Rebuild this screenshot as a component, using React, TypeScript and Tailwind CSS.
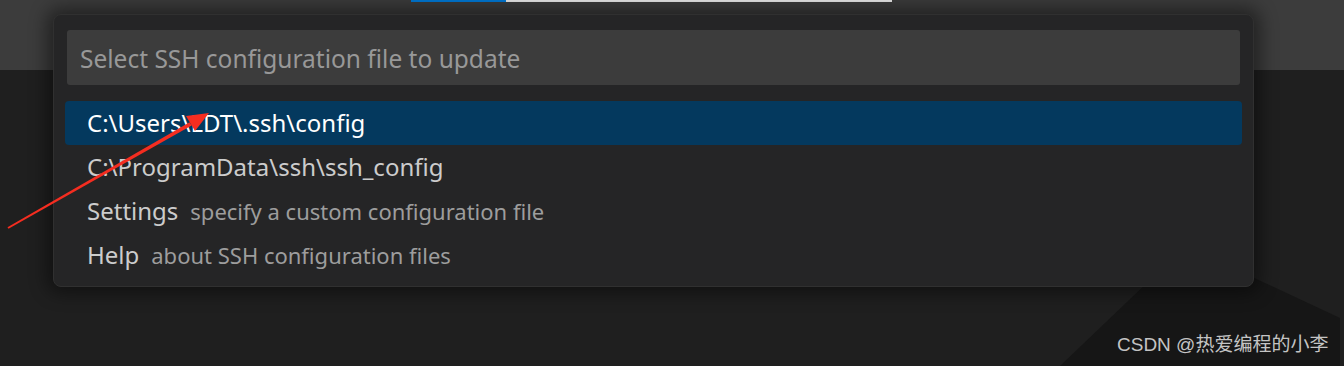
import React from 'react';

const font = { fontFamily: '"Noto Sans", "Open Sans", sans-serif' };

interface PickItem {
    label: string;
    description?: string;
    selected?: boolean;
}

const items: PickItem[] = [
    { label: 'C:\\Users\\LDT\\.ssh\\config', selected: true },
    { label: 'C:\\ProgramData\\ssh\\ssh_config' },
    { label: 'Settings', description: 'specify a custom configuration file' },
    { label: 'Help', description: 'about SSH configuration files' },
];

function QuickPick() {
    return (
        <div
            className="absolute left-[53px] top-[14px] w-[1201px] rounded-[8px] border border-[#303030] bg-[#252526] px-[11px] pt-[15px] pb-[9px] shadow-[0_0_18px_6px_rgba(0,0,0,0.45)]"
            style={font}
        >
            <div className="mx-[2px] flex h-[55px] items-center rounded-[3px] bg-[#3c3c3c] px-[13px] pt-[3px]">
                <span className="text-[24.5px] text-[#989898]">Select SSH configuration file to update</span>
            </div>
            <div className="mt-[16px] flex flex-col">
                {items.map((item) => (
                    <div
                        key={item.label}
                        className={
                            item.selected
                                ? 'flex h-[44px] items-center rounded-[4px] bg-[#04395e] px-[22px] text-white'
                                : 'flex h-[44px] items-center rounded-[4px] px-[22px] text-[#cccccc]'
                        }
                    >
                        <span className="text-[24px]">{item.label}</span>
                        {item.description && (
                            <span className="ml-[12px] text-[22px] text-[#9d9d9d]">{item.description}</span>
                        )}
                    </div>
                ))}
            </div>
        </div>
    );
}

export default function App() {
    return (
        <div className="relative h-[366px] w-[1344px] overflow-hidden bg-[#1f1f1f]">
            {/* title bar with the command center edge */}
            <div className="flex h-[70px] items-start bg-[#3c3c3c]">
                <div className="ml-[411px] h-[2px] w-[95px] bg-[#0078d4]" />
                <div className="h-[2px] w-[386px] bg-[#e8e8e8]" />
            </div>

            {/* editor watermark shape */}
            <svg className="absolute left-0 top-0" width="1344" height="366" viewBox="0 0 1344 366">
                <polygon points="1060,366 1150,280 1250,276 1340,318 1340,366" fill="#161616" />
            </svg>

            <QuickPick />

            {/* red annotation arrow */}
            <svg className="absolute left-0 top-0" width="1344" height="366" viewBox="0 0 1344 366">
                <polygon points="7.5,227.2 8.5,228.8 191.6,125.6 189.6,122.2" fill="#f52d20" />
                <polygon points="209,113 195,131 186,116" fill="#f52d20" />
            </svg>

            <span
                className="absolute left-[1117px] top-[333px] text-[19px] leading-[24px] text-[#c4c4c4]"
                style={{ fontFamily: '"Liberation Sans", "Noto Sans CJK SC", sans-serif' }}
            >
                CSDN @热爱编程的小李
            </span>
        </div>
    );
}
